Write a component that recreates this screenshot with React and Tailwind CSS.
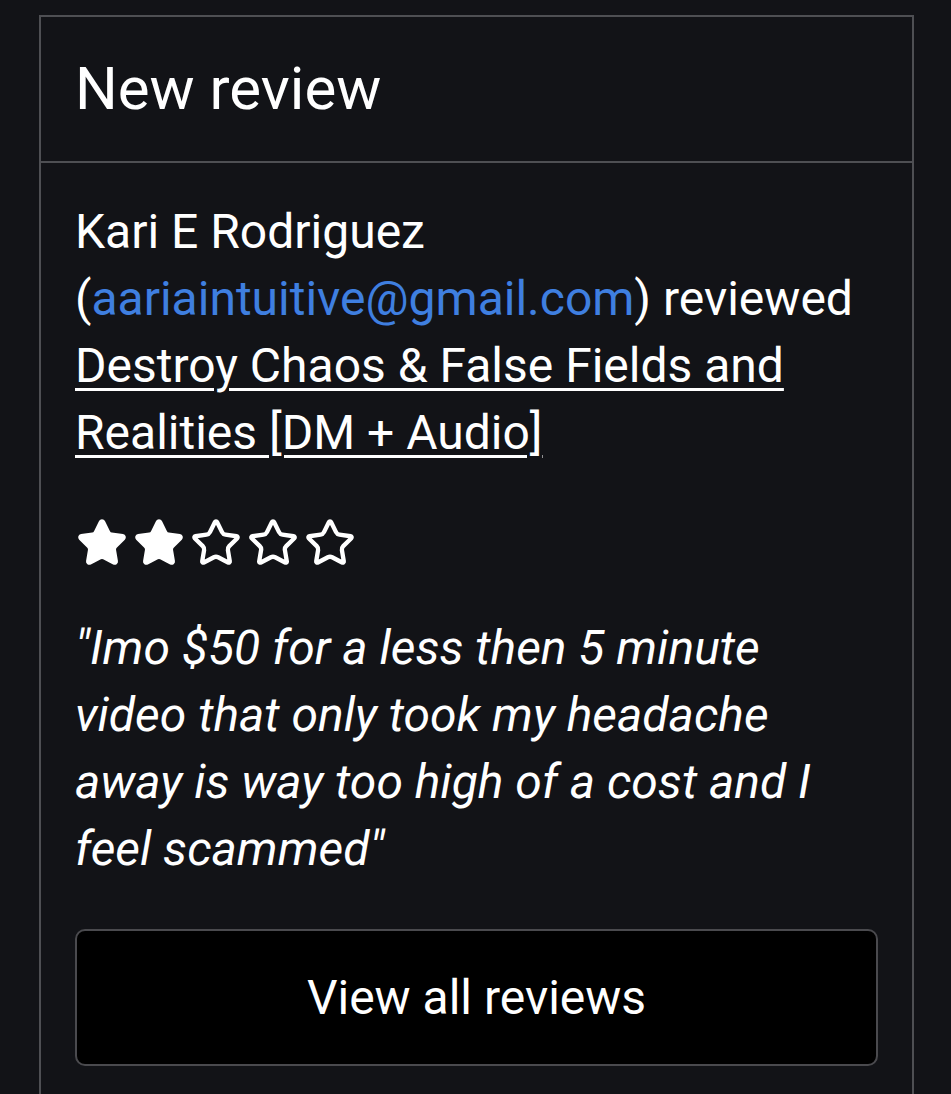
import React from 'react';
import { Star } from 'lucide-react';

const font = { fontFamily: 'Roboto, "Noto Sans", sans-serif' };

export default function App() {
  const rating = 2;
  return (
    <div className="min-h-[1094px] bg-[#121317] pl-[39px] pt-[15px] text-white" style={font}>
      <div className="w-[875px] border-2 border-b-0 border-[#4e4f53]">
        {/* header */}
        <div className="h-[146px] border-b-2 border-[#4e4f53] px-[34px] flex items-center">
          <h2 className="text-[60px] leading-none font-normal">New review</h2>
        </div>

        <div className="px-[34px] pt-[35px] pb-[30px]">
          <p className="text-[48px] leading-[67px]">
            Kari E Rodriguez<br />
            (<a className="text-[#3f7fe0]">aariaintuitive@gmail.com</a>) reviewed{' '}
            <a className="underline underline-offset-[6px] decoration-[3px]">
              Destroy Chaos &amp; False Fields and Realities [DM + Audio]
            </a>
          </p>

          <div className="flex gap-[5px] mt-[51px] ml-[1px]">
            {[1, 2, 3, 4, 5].map(i => (
              <Star
                key={i}
                size={52}
                strokeWidth={2}
                color="#ffffff"
                fill={i <= rating ? '#ffffff' : 'none'}
              />
            ))}
          </div>

          <p className="italic text-[48px] leading-[67px] mt-[45px]">
            "Imo $50 for a less then 5 minute video that only took my headache away is way too high of a cost and I feel scammed"
          </p>

          <button className="mt-[47px] w-full h-[137px] bg-black border-2 border-[#4a4a4e] rounded-[10px] text-[48px] text-white">
            View all reviews
          </button>
        </div>
      </div>
    </div>
  );
}
